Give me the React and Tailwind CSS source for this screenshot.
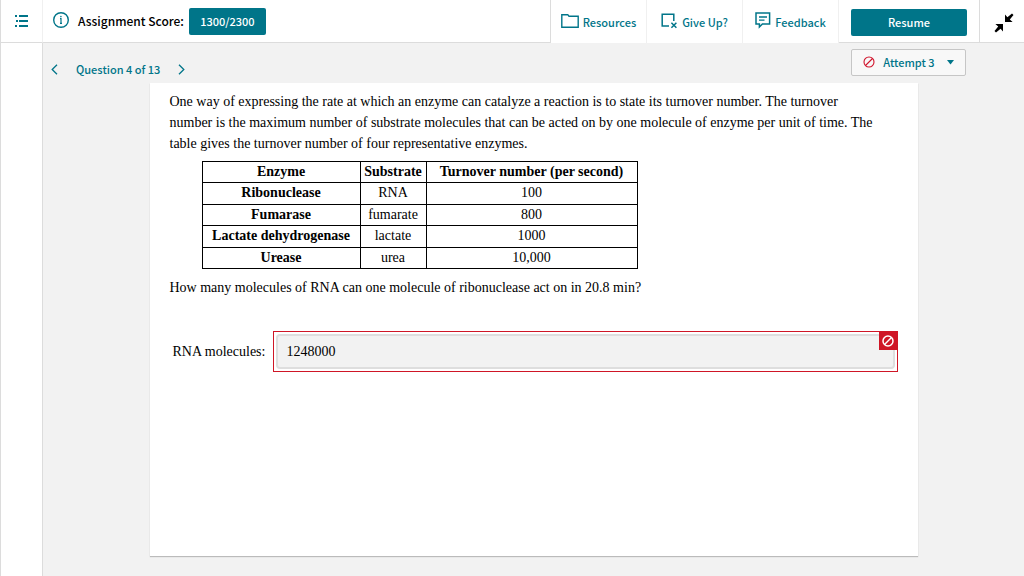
import React from "react";

const rows = [
  ["Ribonuclease", "RNA", "100"],
  ["Fumarase", "fumarate", "800"],
  ["Lactate dehydrogenase", "lactate", "1000"],
  ["Urease", "urea", "10,000"],
];

function ListIcon() {
  return (
    <svg width="14" height="13" viewBox="0 0 14 13" fill="currentColor" aria-hidden="true">
      <path d="M0 0h2v2H0zM4 0h9v2H4zM1 5h2v2H1zM4 5h9v2H4zM0 10h2v2H0zM4 10h9v2H4z" />
    </svg>
  );
}

function InfoIcon() {
  return (
    <svg width="16" height="16" viewBox="0 0 16 16" fill="none" stroke="currentColor" aria-hidden="true">
      <circle cx="8" cy="8" r="7.3" strokeWidth="1.4" />
      <path d="M7 6.7h1v4.6M7 11.3h2" strokeWidth="1.2" />
      <circle cx="7.9" cy="4.6" r=".8" fill="currentColor" stroke="none" />
    </svg>
  );
}

function FolderIcon() {
  return (
    <svg width="18" height="16" viewBox="0 0 18 16" fill="none" stroke="currentColor" strokeWidth="1.4" aria-hidden="true">
      <path d="M.8 14.3V1.7h6l1.2 1.6h9.2v11z" />
    </svg>
  );
}

function GiveUpIcon() {
  return (
    <svg width="17" height="16" viewBox="0 0 17 16" fill="none" stroke="currentColor" strokeWidth="1.5" aria-hidden="true">
      <path d="M8 13H1.2V1.2h11.6V8" />
      <path d="M10.4 9.8l5 5M15.4 9.8l-5 5" />
    </svg>
  );
}

function FeedbackIcon() {
  return (
    <svg width="16" height="17" viewBox="0 0 16 17" fill="none" stroke="currentColor" strokeWidth="1.5" aria-hidden="true">
      <path d="M1 1h13.6v11H7.4L4.4 15v-3H1z" />
      <path d="M4 5h8M4 8.2h5.5" strokeWidth="1.3" />
    </svg>
  );
}

function ShrinkIcon() {
  return (
    <svg width="20" height="20" viewBox="0 0 20 20" fill="currentColor" aria-hidden="true">
      <path d="M11 1.4V9h7.6l-2.8-2.4L19.5 2 18 .5l-4.6 3.7z" />
      <path d="M9 18.6V11H1.4l2.8 2.4L.5 18 2 19.5l4.6-3.7z" />
    </svg>
  );
}

function BanIcon({ size, weight }) {
  return (
    <svg width={size} height={size} viewBox="0 0 12 12" fill="none" stroke="currentColor" strokeWidth={weight} aria-hidden="true">
      <circle cx="6" cy="6" r="5" />
      <path d="M9.5 2.5l-7 7" />
    </svg>
  );
}

function Chevron({ d }) {
  return (
    <svg width="7" height="11" viewBox="0 0 7 11" fill="none" stroke="currentColor" strokeWidth="1.3" aria-hidden="true">
      <path d={d} />
    </svg>
  );
}

function Tool({ icon, label }) {
  return (
    <button type="button" className="flex w-24 items-center justify-center gap-1 border-r border-[#f0f0f0] bg-white text-[11px] font-medium text-[#007589]">
      <span className="pb-0.5">{icon}</span>
      <span>{label}</span>
    </button>
  );
}

export default function App() {
  return (
    <div className="flex min-h-screen flex-col border-l border-[#dcdcdc] bg-[#f2f2f2] font-['Noto_Sans_CJK_SC',sans-serif] text-[11px] leading-4 font-medium text-black">
      <header className="flex h-[43px] bg-white">
        <button type="button" aria-label="Contents" className="flex w-[42px] shrink-0 items-center justify-center border-r border-b border-r-[#f0f0f0] border-b-[#dcdcdc] text-[#007589]">
          <ListIcon />
        </button>
        <div className="flex flex-1 items-center border-r border-b border-[#dcdcdc] pl-[10px]">
          <span className="pb-0.5 text-[#007589]"><InfoIcon /></span>
          <span className="ml-[9px] text-[12px]">Assignment Score:</span>
          <span className="ml-[5px] flex h-[27px] w-[77px] items-center justify-center rounded-xs bg-[#007589] text-white">1300/2300</span>
        </div>
        <nav className="flex" aria-label="Question tools">
          <Tool icon={<FolderIcon />} label="Resources" />
          <Tool icon={<GiveUpIcon />} label="Give Up?" />
          <Tool icon={<FeedbackIcon />} label="Feedback" />
        </nav>
        <div className="flex items-center border-r border-b border-[#dcdcdc] px-3 pt-0.5">
          <button type="button" className="h-[27px] w-[116px] rounded-xs bg-[#007589] text-white">Resume</button>
        </div>
        <button type="button" aria-label="Exit full screen" className="flex w-11 items-center justify-center border-b border-[#dcdcdc] pt-1 pl-1">
          <ShrinkIcon />
        </button>
      </header>

      <div className="flex flex-1">
        <aside className="w-[42px] shrink-0 border-r border-[#dcdcdc] bg-white" />
        <main className="flex min-w-0 flex-1 flex-col">
          <div className="flex h-10 items-center justify-between pr-[58px] pb-0.5 pl-2 text-[#007589]">
            <div className="flex items-center pt-[14px]">
              <button type="button" aria-label="Previous question"><Chevron d="M6 .8L1.2 5.5 6 10.2" /></button>
              <span className="mx-[18px]">Question 4 of 13</span>
              <button type="button" aria-label="Next question"><Chevron d="M1 .8l4.8 4.7L1 10.2" /></button>
            </div>
            <button type="button" className="flex h-[27px] w-[115px] items-center justify-center gap-2 rounded-xs border border-[#c6c6c6] bg-[#f8f8f8]">
              <span className="text-[#d0142c]"><BanIcon size={12} weight={1.1} /></span>
              Attempt 3
              <svg width="7" height="5" viewBox="0 0 7 5" fill="currentColor" className="ml-1" aria-hidden="true"><path d="M0 0h7L3.5 4.5z" /></svg>
            </button>
          </div>

          <section className="mx-auto mb-5 w-full max-w-3xl flex-1 bg-white px-5 pt-2 font-['Liberation_Serif',serif] text-[14px] leading-[21px] font-normal shadow-[0_1px_1px_#bbbbbb]">
            <p className="pr-5">
              One way of expressing the rate at which an enzyme can catalyze a reaction is to state its turnover number. The turnover number is the maximum number of substrate molecules that can be acted on by one molecule of enzyme per unit of time. The table gives the turnover number of four representative enzymes.
            </p>
            <table className="mt-[7px] ml-8 h-[108px] w-[436px] table-fixed border-collapse border border-black text-center leading-5">
              <thead>
                <tr>
                  <th scope="col" className="w-[158px] border border-black">Enzyme</th>
                  <th scope="col" className="w-[66px] border border-black">Substrate</th>
                  <th scope="col" className="border border-black">Turnover number (per second)</th>
                </tr>
              </thead>
              <tbody>
                {rows.map(([name, substrate, turnover]) => (
                  <tr key={name}>
                    <th scope="row" className="border border-black">{name}</th>
                    <td className="border border-black">{substrate}</td>
                    <td className="border border-black">{turnover}</td>
                  </tr>
                ))}
              </tbody>
            </table>
            <p className="mt-2">How many molecules of RNA can one molecule of ribonuclease act on in 20.8 min?</p>
            <div className="mt-[33px] flex items-center pl-[3px]">
              <label htmlFor="answer" className="shrink-0 pr-2">RNA molecules:</label>
              <div className="relative flex-1 border border-[#cf1626] p-[2px]">
                <input id="answer" readOnly defaultValue="1248000" className="block h-[35px] w-full rounded-sm border-2 border-[#dedede] bg-[#f2f2f2] px-2 outline-none" />
                <span className="absolute -top-px -right-px flex size-[19px] items-center justify-center bg-[#cf1626] text-white">
                  <BanIcon size={12} weight={1.5} />
                </span>
              </div>
            </div>
          </section>
        </main>
      </div>
    </div>
  );
}
